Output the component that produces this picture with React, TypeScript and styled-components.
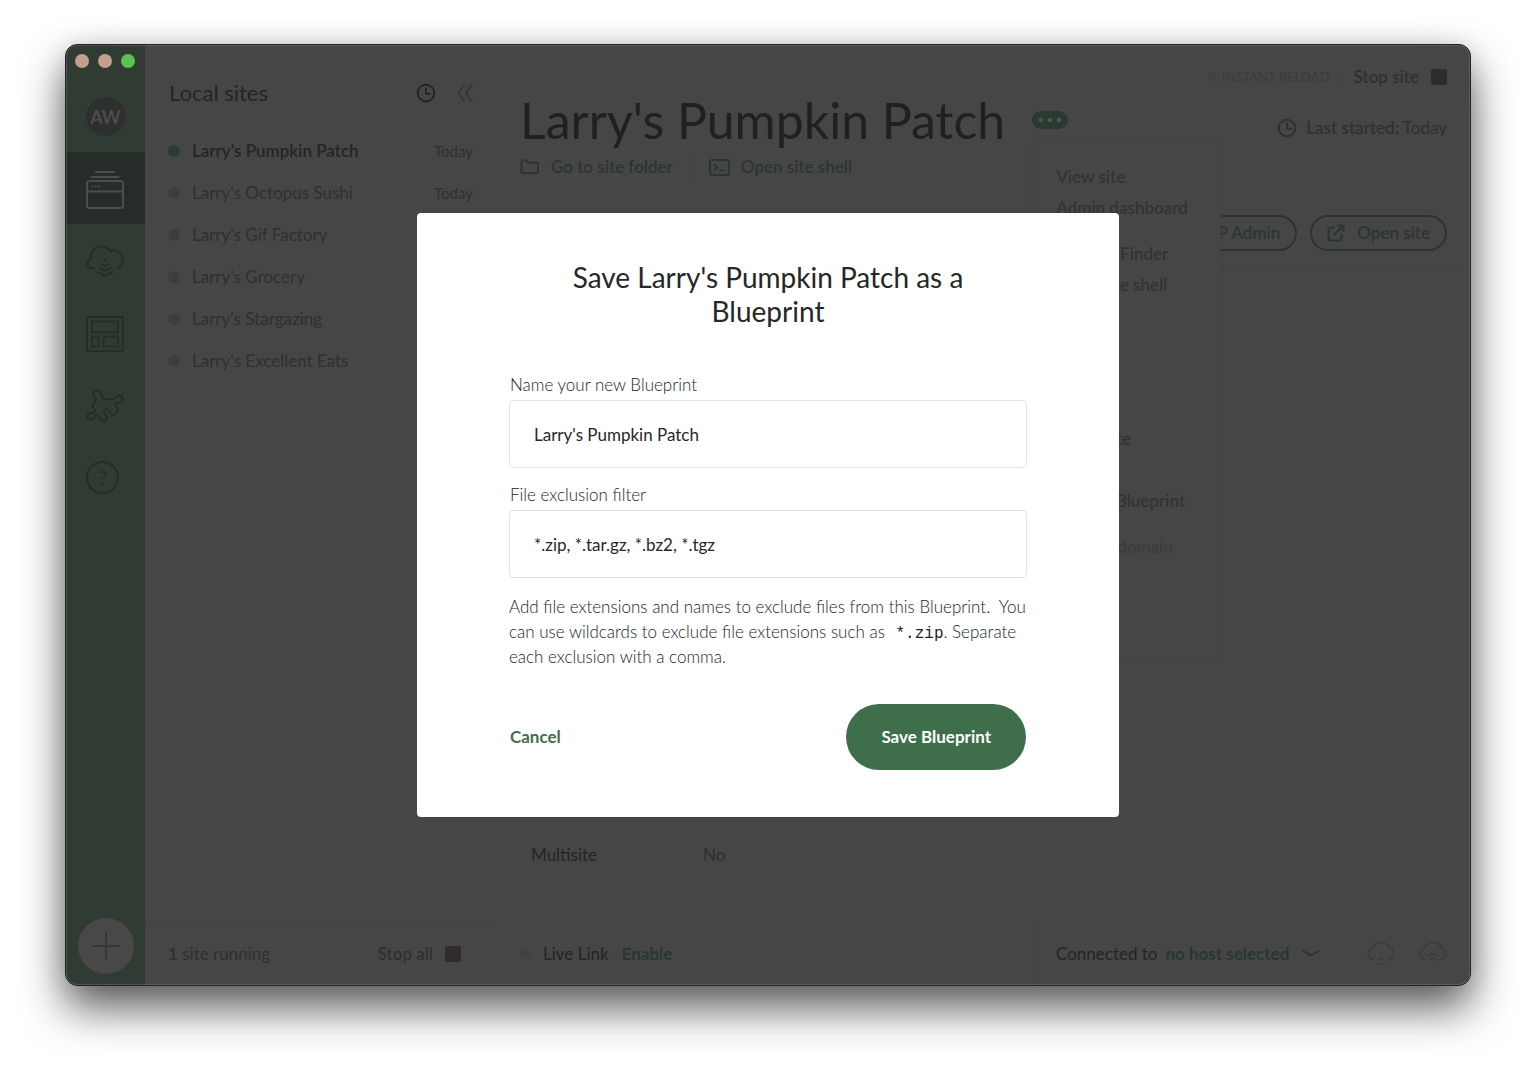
import React from 'react';
import styled, { createGlobalStyle } from 'styled-components';

const c = {
  surface: '#464646',
  rail: '#303b34',
  railActive: '#262d29',
  railInk: '#252d29',
  ink: '#232525',
  text: '#2f3030',
  faint: '#3c3c3c',
  line: '#424242',
  green: '#2a362f',
  stop: '#302c2d',
  brand: '#3f6e4b',
};

const Global = createGlobalStyle`
  *, *::before, *::after { box-sizing: border-box; }
  body { margin: 0; background: #fff; }
  body, button, input { font-family: Lato, "Noto Sans", sans-serif; font-size: 17px; line-height: 24px; }
  button { padding: 0; border: 0; background: none; color: inherit; cursor: pointer; }
  ul, dl, dd, h1, h2, p { margin: 0; padding: 0; }
  ul { list-style: none; }
  svg { display: block; flex: none; }
`;

const Page = styled.div`
  display: flex;
  min-height: 100vh;
  padding: 44px 65px 86px;
`;

const Shadow = styled.div`
  flex: 1;
  display: flex;
  border-radius: 12px;
  box-shadow: 0 22px 44px rgba(0, 0, 0, 0.64), 0 0 24px rgba(0, 0, 0, 0.1);
`;

const Window = styled.div`
  position: relative;
  flex: 1;
  display: grid;
  grid-template-columns: 79px 351px 1fr;
  overflow: hidden;
  border: 1px solid #232323;
  border-radius: 12px;
  background: ${c.surface};
  color: ${c.text};
`;

const Lights = styled.div`
  position: absolute;
  z-index: 6;
  top: 9px;
  left: 9px;
  display: flex;
  gap: 9px;
`;

const Light = styled.button<{ $color: string }>`
  width: 14px;
  height: 14px;
  border-radius: 50%;
  background: ${(p) => p.$color};
`;

/* Rail */

const Rail = styled.nav`
  display: flex;
  flex-direction: column;
  align-items: center;
  padding: 52px 0 11px;
  background: ${c.rail};
`;

const Avatar = styled.button`
  width: 39px;
  height: 39px;
  margin-bottom: 16px;
  border-radius: 50%;
  background: #2e2f2f;
  color: #4c4c4c;
  font-weight: 700;
  font-size: 18px;
`;

const RailItem = styled.button<{ $active?: boolean }>`
  display: flex;
  align-items: center;
  justify-content: center;
  width: 100%;
  height: 72px;
  padding: 3px 2px 0 0;
  background: ${(p) => (p.$active ? c.railActive : 'transparent')};
  color: ${(p) => (p.$active ? '#48504b' : c.railInk)};
`;

const HelpMark = styled.span`
  display: block;
  width: 33px;
  height: 33px;
  margin-right: 4px;
  border: 2px solid currentColor;
  border-radius: 50%;
  font-size: 20px;
  line-height: 29px;
  text-align: center;
`;

const AddButton = styled.button`
  display: flex;
  align-items: center;
  justify-content: center;
  width: 56px;
  height: 56px;
  margin-top: auto;
  border-radius: 50%;
  background: #484848;
  color: ${c.rail};
`;

/* Sidebar */

const Sidebar = styled.aside`
  display: flex;
  flex-direction: column;
  padding-top: 27px;
`;

const SidebarHead = styled.div`
  display: flex;
  align-items: center;
  height: 42px;
  margin-bottom: 16px;
  padding: 0 22px 0 24px;
  color: ${c.ink};
`;

const SidebarTitle = styled.h2`
  flex: 1;
  font-weight: 400;
  font-size: 22px;
`;

const IconButton = styled.button<{ $tone?: string; $gap?: number }>`
  margin-left: ${(p) => p.$gap || 20}px;
  color: ${(p) => p.$tone || 'inherit'};
`;

const SiteRow = styled.li<{ $active?: boolean }>`
  display: flex;
  align-items: center;
  height: 42px;
  padding: 0 23px;
  gap: 12px;
  color: ${(p) => (p.$active ? c.ink : c.text)};
  font-weight: ${(p) => (p.$active ? 600 : 400)};
`;

const Dot = styled.span<{ $color: string; $size: number }>`
  flex: none;
  width: ${(p) => p.$size}px;
  height: ${(p) => p.$size}px;
  border-radius: 50%;
  background: ${(p) => p.$color};
`;

const SiteName = styled.a`
  flex: 1;
  color: inherit;
  text-decoration: none;
`;

const SiteTime = styled.span`
  color: ${c.text};
  font-weight: 400;
  font-size: 15px;
`;

const SidebarFoot = styled.div`
  display: flex;
  align-items: center;
  justify-content: space-between;
  height: 64px;
  margin-top: auto;
  padding: 0 35px 0 23px;
  border-top: 1px solid ${c.line};
`;

const StopButton = styled.button`
  display: flex;
  align-items: center;
  gap: 12px;
  color: ${c.text};
  font-weight: 600;
`;

const StopSquare = styled.span`
  width: 16px;
  height: 16px;
  border-radius: 2px;
  background: ${c.stop};
`;

/* Main */

const Main = styled.main`
  display: flex;
  flex-direction: column;
`;

const Header = styled.header`
  display: flex;
  justify-content: space-between;
  height: 219px;
  padding: 20px 23px 0 24px;
`;

const Heading = styled.div`
  padding-top: 23px;
`;

const TitleRow = styled.div`
  display: flex;
  align-items: center;
  gap: 27px;
  margin-bottom: 3px;
`;

const Title = styled.h1`
  color: #1f2121;
  font-weight: 400;
  font-size: 50px;
  line-height: 64px;
  white-space: nowrap;
`;

const MenuAnchor = styled.div`
  position: relative;
`;

const MoreButton = styled.button`
  display: flex;
  align-items: center;
  justify-content: center;
  width: 36px;
  height: 18px;
  border-radius: 9px;
  background: #2b3b31;
`;

const Menu = styled.div`
  position: absolute;
  z-index: 1;
  top: calc(100% + 13px);
  left: 0;
  display: flex;
  flex-direction: column;
  gap: 15px;
  width: 189px;
  padding: 18px 0 20px;
  border: 1px solid #434343;
  border-radius: 4px;
  background: ${c.surface};
  box-shadow: 0 0 4px rgba(0, 0, 0, 0.06);
`;

const MenuItem = styled.button<{ $off?: boolean }>`
  display: block;
  width: 100%;
  padding-left: 23px;
  color: ${(p) => (p.$off ? c.faint : '#323333')};
  font-weight: 600;
  line-height: 31px;
  text-align: left;
`;

const QuickLinks = styled.div`
  display: flex;
  align-items: center;
`;

const QuickLink = styled.a`
  display: flex;
  align-items: center;
  gap: 11px;
  color: ${c.green};
  font-weight: 600;
  text-decoration: none;

  & + & {
    margin-left: 18px;
    padding-left: 17px;
    border-left: 1px solid ${c.line};
  }
`;

const Side = styled.div`
  display: flex;
  flex-direction: column;
  align-items: flex-end;
`;

const StatusRow = styled.div`
  display: flex;
  align-items: center;
  margin-bottom: 27px;
`;

const Reload = styled.span`
  display: flex;
  align-items: center;
  gap: 6px;
  margin-right: 12px;
  padding-right: 11px;
  border-right: 1px solid #444;
  color: ${c.faint};
  font-weight: 500;
  font-size: 13px;
`;

const Started = styled.div`
  display: flex;
  align-items: center;
  gap: 9px;
  margin-bottom: 75px;
`;

const Strong = styled.b`
  font-weight: 700;
`;

const Medium = styled.b`
  font-weight: 600;
`;

const Actions = styled.div`
  display: flex;
  gap: 13px;
`;

const Action = styled.button`
  display: flex;
  align-items: center;
  gap: 12px;
  height: 36px;
  padding: 0 15px;
  border: 2px solid ${c.green};
  border-radius: 18px;
  color: ${c.green};
  font-weight: 600;
`;

const Overview = styled.section`
  flex: 1;
  display: flex;
  flex-direction: column;
  justify-content: flex-end;
  padding: 0 35px 54px;
  border-top: 1px solid #444;
`;

const Facts = styled.dl`
  display: grid;
  grid-template-columns: 172px 1fr;
`;

const FactName = styled.dt`
  color: ${c.ink};
`;

const FactValue = styled.dd`
  color: ${c.text};
`;

const Footer = styled.footer`
  display: flex;
  height: 64px;
  border-top: 1px solid #444;
`;

const LiveLink = styled.div`
  flex: 1;
  display: flex;
  align-items: center;
  gap: 13px;
  padding-left: 24px;
  color: ${c.ink};
`;

const LinkButton = styled.button`
  color: ${c.green};
  font-weight: 700;
`;

const Connection = styled.div`
  flex: 0 0 438px;
  display: flex;
  align-items: center;
  padding: 0 23px;
  border-left: 1px solid #434343;
  color: ${c.ink};
`;

const HostButton = styled.button`
  display: flex;
  align-items: center;
  gap: 13px;
  margin: 0 auto 0 8px;
  color: ${c.green};
  font-weight: 700;
`;

/* Dialog */

const Overlay = styled.div`
  position: absolute;
  z-index: 5;
  inset: 0;
  display: flex;
  align-items: center;
  justify-content: center;
  box-shadow: inset 0 0 0 1px rgba(255, 255, 255, 0.13);
  border-radius: 11px;
`;

const Dialog = styled.form`
  width: 702px;
  max-width: 100%;
  padding: 47px 92px;
  border-radius: 4px;
  background: #fff;
  color: #1c1e1e;
`;

const DialogTitle = styled.h2`
  margin-bottom: 45px;
  padding: 0 48px;
  color: #262727;
  font-weight: 400;
  font-size: 28px;
  line-height: 34px;
  text-align: center;
`;

const Field = styled.label`
  display: block;
  margin-bottom: 15px;
  font-weight: 300;
`;

const FieldName = styled.span`
  display: block;
  margin-bottom: 3px;
  padding-left: 1px;
`;

const Input = styled.input`
  display: block;
  width: 100%;
  height: 68px;
  padding: 0 24px;
  border: 1px solid #e2e2e2;
  border-radius: 5px;
  outline: 0;
  background: #fff;
  color: #262727;
  font-weight: 400;
`;

const Help = styled.p`
  margin: 16px 0 35px;
  font-weight: 300;
  line-height: 25px;
`;

const Code = styled.code`
  margin-left: 6px;
  font-size: 16px;
  font-family: "Liberation Mono", monospace;
  line-height: 16px;
`;

const Buttons = styled.div`
  display: flex;
  align-items: center;
  justify-content: space-between;
`;

const Cancel = styled.button`
  padding-left: 1px;
  color: ${c.brand};
  font-weight: 700;
`;

const Save = styled.button`
  height: 66px;
  margin-right: 1px;
  padding: 0 35px;
  border-radius: 33px;
  background: ${c.brand};
  color: #fff;
  font-weight: 700;
`;

const line = { fill: 'none', stroke: 'currentColor', strokeWidth: 2, strokeLinecap: 'round', strokeLinejoin: 'round' } as const;

const SitesIcon = () => (
  <svg width="38" height="40" viewBox="0 0 38 40" {...line}>
    <path d="M10 2h18M5.500 7h27" />
    <rect x="1" y="11" width="36" height="27" rx="2.500" />
    <path d="M1 21.500h36" />
    <path d="M6 16.500h.1M9.500 16.500h.1M13 16.500h.1" />
  </svg>
);

const CloudSyncIcon = () => (
  <svg width="38" height="34" viewBox="0 0 38 34" {...line}>
    <path d="M7.500 23C4 23.500 1.200 21.500 1.200 18.500 1.200 16 2.800 14.200 5 13.600 4 6.500 9.500 1.500 15.500 1.500c3.800 0 6.800 1.700 8.700 4.300 6-1.800 12.600 2.600 12.600 8.900 0 3.800-2 7-5.300 8.300" />
    <circle cx="19" cy="15" r="1.500" fill="currentColor" stroke="none" />
    <path d="M16.300 19.500l2.700 1.200 2.700-1.200M14 23.300l5 2.600 5-2.600M11.500 27l7.500 3.800 7.500-3.800" />
  </svg>
);

const BlueprintIcon = () => (
  <svg width="38" height="36" viewBox="0 0 38 36" {...line} strokeLinejoin="miter">
    <rect x="1" y="1" width="36" height="34" />
    <rect x="6" y="5.500" width="26" height="11" />
    <rect x="6" y="20.500" width="6.500" height="10" />
    <rect x="17.500" y="20.500" width="14.500" height="10" />
  </svg>
);

const PuzzleIcon = () => (
  <svg width="38" height="34" viewBox="0 0 38 34" {...line}>
    <path d="M11.500 1.500C8.800 1.500 6.600 4 7.300 6.600c.6 2 2.900 2 3 4.100C10.400 13 6.300 14.500 6.300 17c0 2.200 2.700 2.600 2.700 5 0 2.200-2.600 1.400-4.700 2-2.600.8-3.700 3.600-2.300 5.600 1.500 2 4.500 1.700 5.800-.4 1-1.700.7-3.400 2.800-3.500 2.700 0 2.300 5.500 6.400 6.300 2.500.3 4.300-2 3.700-4.200-.5-2.200-3-2.700-3-5 0-2.300 2.900-3.500 4.600-2 1.900 1.500 1.400 4.700 4.500 4.900 3 .2 5.500-3 4.800-5.800-.5-2-2.400-2.600-2.200-4.600.3-2.400 3.400-.9 5.600-2.200 2.300-1.500 2.300-4.600.2-6-2-1.200-4.400-.3-5.500 1.400-1.100 1.700-2.600 2.200-4.700 1.600-2.200-.6-4.200 1-6 .3C14.800 9 16 6.800 15.500 4.600 15 2.700 13.400 1.500 11.500 1.500z" />
  </svg>
);

const PlusIcon = () => (
  <svg width="28" height="28" viewBox="0 0 28 28" {...line} strokeLinecap="butt">
    <path d="M14 0v28M0 14h28" />
  </svg>
);

const ClockIcon = () => (
  <svg width="20" height="20" viewBox="0 0 20 20" {...line}>
    <circle cx="10" cy="10" r="8.300" />
    <path d="M10 5.500V10.700h4" />
  </svg>
);

const CollapseIcon = () => (
  <svg width="18" height="20" viewBox="0 0 18 20" {...line}>
    <path d="M8 2L2.500 10 8 18M15.500 2L10 10l5.500 8" />
  </svg>
);

const FolderIcon = () => (
  <svg width="20" height="16" viewBox="0 0 20 16" {...line}>
    <path d="M1.500 14V1.500h5l1.800 2.200H18V14z" />
  </svg>
);

const ShellIcon = () => (
  <svg width="21" height="17" viewBox="0 0 21 17" {...line}>
    <rect x="1" y="1" width="19" height="15" rx="2" />
    <path d="M5.500 6l2.700 2.500-2.700 2.500M11.500 11.500h3.500" />
  </svg>
);

const OpenIcon = () => (
  <svg width="18" height="18" viewBox="0 0 18 18" {...line}>
    <path d="M7 3.500H4A2.500 2.500 0 0 0 1.500 6v8A2.500 2.500 0 0 0 4 16.500h8a2.500 2.500 0 0 0 2.500-2.500v-3.500" />
    <path d="M11 1.500h5.500V7M16 2L7.500 10.500" />
  </svg>
);

const ChevronIcon = () => (
  <svg width="18" height="10" viewBox="0 0 18 10" {...line}>
    <path d="M1.500 2.200L9 6.500l7.500-4.300" />
  </svg>
);

const CloudIcon = ({ up }: { up?: boolean }) => (
  <svg width="28" height="26" viewBox="0 0 28 26" {...line} strokeWidth={1.6}>
    <path d="M6.500 18.500C3.500 18.500 1 16 1 12.800 1 10 2.800 7.800 5.500 7.200 6.500 3.800 9.800 1.500 14 1.500s7.500 2.300 8.500 5.700C25.200 7.800 27 10 27 12.800c0 3.200-2.500 5.700-5.500 5.700" />
    {up ? (
      <path d="M9.500 14.700c3-2.400 6-2.400 9 0M11.500 18.300c1.700-1.400 3.300-1.400 5 0M14 22.500v.5" />
    ) : (
      <path d="M14 13v.5M11.500 17.500c1.700 1.400 3.300 1.400 5 0M9.500 21.500c3 2.400 6 2.400 9 0" />
    )}
  </svg>
);

const DotsIcon = () => (
  <svg width="24" height="6" viewBox="0 0 24 6" fill="#4b564f">
    <circle cx="3" cy="3" r="2.300" />
    <circle cx="12" cy="3" r="2.300" />
    <circle cx="21" cy="3" r="2.300" />
  </svg>
);

const sites = [
  { name: "Larry's Pumpkin Patch", time: 'Today', active: true },
  { name: "Larry's Octopus Sushi", time: 'Today' },
  { name: "Larry's Gif Factory" },
  { name: "Larry's Grocery" },
  { name: "Larry's Stargazing" },
  { name: "Larry's Excellent Eats" },
];

const menu = [
  ['View site', 'Admin dashboard'],
  ['Open in Finder', 'Open site shell'],
  ['Start', 'Stop', 'Restart'],
  ['Clone site', 'Export', 'Save as Blueprint'],
  ['Change domain', 'Rename'],
  ['Delete'],
];

export default function App() {
  return (
    <Page>
      <Global />
      <Shadow>
        <Window>
          <Lights>
            <Light $color="#c3a08d" aria-label="Close" />
            <Light $color="#c3a08d" aria-label="Minimize" />
            <Light $color="#5ac351" aria-label="Zoom" />
          </Lights>

          <Rail>
            <Avatar>AW</Avatar>
            <RailItem $active aria-label="Local sites"><SitesIcon /></RailItem>
            <RailItem aria-label="Connect"><CloudSyncIcon /></RailItem>
            <RailItem aria-label="Blueprints"><BlueprintIcon /></RailItem>
            <RailItem aria-label="Add-ons"><PuzzleIcon /></RailItem>
            <RailItem aria-label="Help"><HelpMark>?</HelpMark></RailItem>
            <AddButton aria-label="Add site"><PlusIcon /></AddButton>
          </Rail>

          <Sidebar>
            <SidebarHead>
              <SidebarTitle>Local sites</SidebarTitle>
              <IconButton aria-label="Sort by last started"><ClockIcon /></IconButton>
              <IconButton $tone="#363737" aria-label="Collapse"><CollapseIcon /></IconButton>
            </SidebarHead>
            <ul>
              {sites.map((s) => (
                <SiteRow key={s.name} $active={s.active}>
                  <Dot $size={12} $color={s.active ? '#2b3d32' : '#3d3d3d'} />
                  <SiteName href="#site">{s.name}</SiteName>
                  {s.time && <SiteTime>{s.time}</SiteTime>}
                </SiteRow>
              ))}
            </ul>
            <SidebarFoot>
              <span><Strong>1</Strong> site running</span>
              <StopButton>Stop all <StopSquare /></StopButton>
            </SidebarFoot>
          </Sidebar>

          <Main>
            <Header>
              <Heading>
                <TitleRow>
                  <Title>Larry's Pumpkin Patch</Title>
                  <MenuAnchor>
                    <MoreButton aria-label="More actions"><DotsIcon /></MoreButton>
                    <Menu>
                      {menu.map((group) => (
                        <div key={group[0]}>
                          {group.map((item) => (
                            <MenuItem key={item} type="button" $off={item === 'Change domain'}>{item}</MenuItem>
                          ))}
                        </div>
                      ))}
                    </Menu>
                  </MenuAnchor>
                </TitleRow>
                <QuickLinks>
                  <QuickLink href="#folder"><FolderIcon />Go to site folder</QuickLink>
                  <QuickLink href="#shell"><ShellIcon />Open site shell</QuickLink>
                </QuickLinks>
              </Heading>
              <Side>
                <StatusRow>
                  <Reload><Dot $size={8} $color="#424242" />INSTANT RELOAD</Reload>
                  <StopButton>Stop site <StopSquare /></StopButton>
                </StatusRow>
                <Started>
                  <ClockIcon />
                  <span><Medium>Last started:</Medium> Today</span>
                </Started>
                <Actions>
                  <Action><OpenIcon />WP Admin</Action>
                  <Action><OpenIcon />Open site</Action>
                </Actions>
              </Side>
            </Header>
            <Overview>
              <Facts>
                <FactName>Multisite</FactName>
                <FactValue>No</FactValue>
              </Facts>
            </Overview>
            <Footer>
              <LiveLink>
                <Dot $size={10} $color="#424242" />
                <span>Live Link</span>
                <LinkButton>Enable</LinkButton>
              </LiveLink>
              <Connection>
                Connected to
                <HostButton>no host selected <ChevronIcon /></HostButton>
                <IconButton $tone={c.faint} aria-label="Pull"><CloudIcon /></IconButton>
                <IconButton $tone={c.faint} $gap={24} aria-label="Push"><CloudIcon up /></IconButton>
              </Connection>
            </Footer>
          </Main>

          <Overlay>
            <Dialog role="dialog" aria-labelledby="blueprint-title" onSubmit={(e) => e.preventDefault()}>
              <DialogTitle id="blueprint-title">Save Larry's Pumpkin Patch as a Blueprint</DialogTitle>
              <Field>
                <FieldName>Name your new Blueprint</FieldName>
                <Input defaultValue="Larry's Pumpkin Patch" />
              </Field>
              <Field>
                <FieldName>File exclusion filter</FieldName>
                <Input defaultValue="*.zip, *.tar.gz, *.bz2, *.tgz" />
              </Field>
              <Help>
                Add file extensions and names to exclude files from this Blueprint.&nbsp; You can use wildcards to
                exclude file extensions such as <Code>*.zip</Code>. Separate each exclusion with a comma.
              </Help>
              <Buttons>
                <Cancel type="button">Cancel</Cancel>
                <Save>Save Blueprint</Save>
              </Buttons>
            </Dialog>
          </Overlay>
        </Window>
      </Shadow>
    </Page>
  );
}
